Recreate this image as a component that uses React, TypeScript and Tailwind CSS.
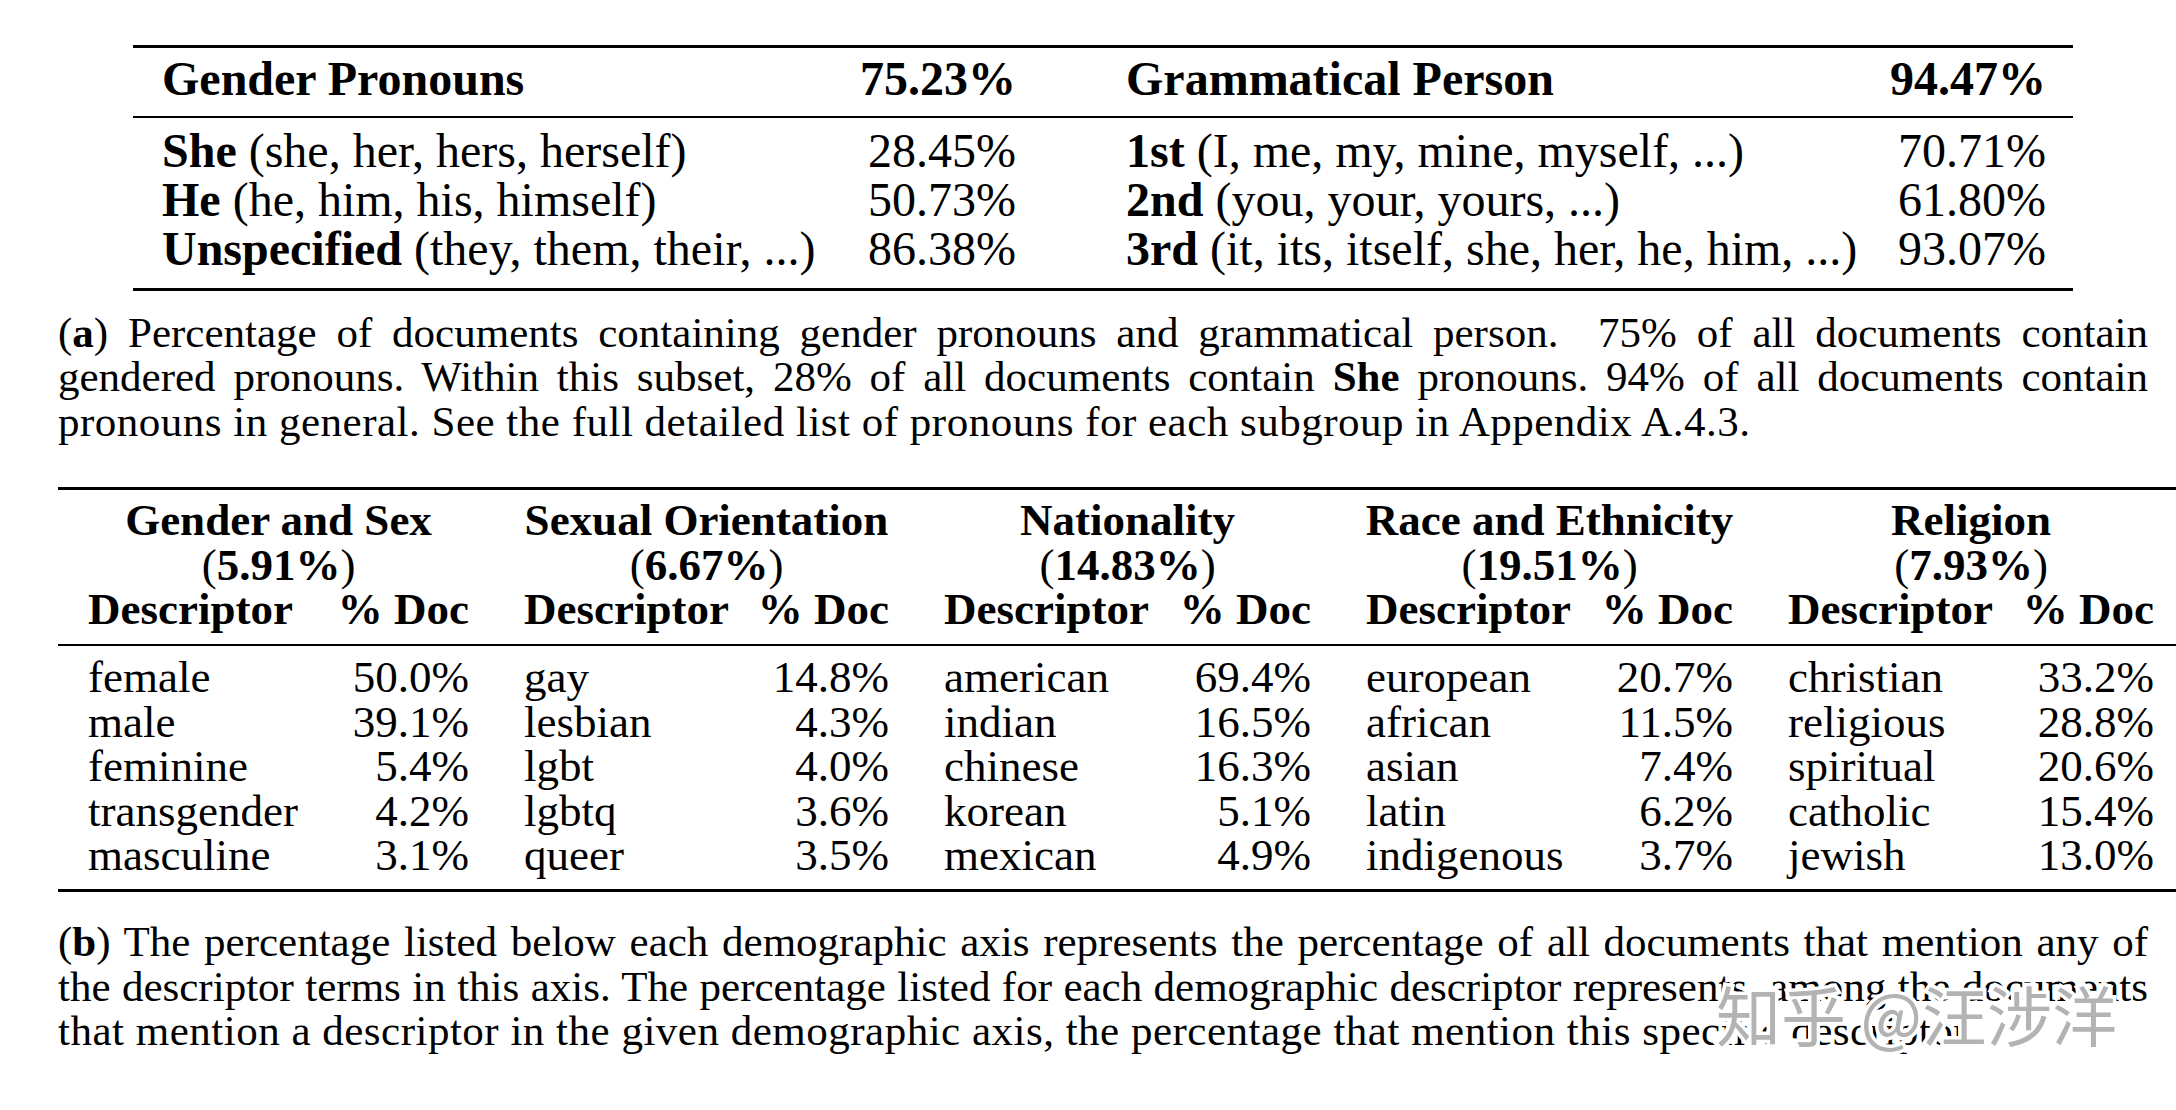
import React from 'react'

type Group = {
  name: string
  pct: string
  rows: [string, string][]
}

const groups: Group[] = [
  {
    name: 'Gender and Sex',
    pct: '5.91%',
    rows: [
      ['female', '50.0%'],
      ['male', '39.1%'],
      ['feminine', '5.4%'],
      ['transgender', '4.2%'],
      ['masculine', '3.1%'],
    ],
  },
  {
    name: 'Sexual Orientation',
    pct: '6.67%',
    rows: [
      ['gay', '14.8%'],
      ['lesbian', '4.3%'],
      ['lgbt', '4.0%'],
      ['lgbtq', '3.6%'],
      ['queer', '3.5%'],
    ],
  },
  {
    name: 'Nationality',
    pct: '14.83%',
    rows: [
      ['american', '69.4%'],
      ['indian', '16.5%'],
      ['chinese', '16.3%'],
      ['korean', '5.1%'],
      ['mexican', '4.9%'],
    ],
  },
  {
    name: 'Race and Ethnicity',
    pct: '19.51%',
    rows: [
      ['european', '20.7%'],
      ['african', '11.5%'],
      ['asian', '7.4%'],
      ['latin', '6.2%'],
      ['indigenous', '3.7%'],
    ],
  },
  {
    name: 'Religion',
    pct: '7.93%',
    rows: [
      ['christian', '33.2%'],
      ['religious', '28.8%'],
      ['spiritual', '20.6%'],
      ['catholic', '15.4%'],
      ['jewish', '13.0%'],
    ],
  },
]

const pronounRows: { left: [string, string, string]; right: [string, string, string] }[] = [
  {
    left: ['She', '(she, her, hers, herself)', '28.45%'],
    right: ['1st', '(I, me, my, mine, myself, ...)', '70.71%'],
  },
  {
    left: ['He', '(he, him, his, himself)', '50.73%'],
    right: ['2nd', '(you, your, yours, ...)', '61.80%'],
  },
  {
    left: ['Unspecified', '(they, them, their, ...)', '86.38%'],
    right: ['3rd', '(it, its, itself, she, her, he, him, ...)', '93.07%'],
  },
]

// caption lines: justified except the last one, which is set ragged
function Line({ children, last }: { children: React.ReactNode; last?: boolean }) {
  return (
    <div
      className={
        last
          ? 'text-left whitespace-nowrap tracking-[0.5px]'
          : 'text-justify [text-align-last:justify]'
      }
    >
      {children}
    </div>
  )
}

function PronounTable() {
  return (
    <div className="w-[1940px] text-[48px] leading-[49px]">
      <div className="h-[3px] bg-black" />
      <div className="grid grid-cols-[854px_920px] gap-x-[110px] pl-[29px] pt-[6px] pb-[13px] font-bold">
        <div className="flex justify-between">
          <span>Gender Pronouns</span>
          <span>75.23%</span>
        </div>
        <div className="flex justify-between">
          <span>Grammatical Person</span>
          <span>94.47%</span>
        </div>
      </div>
      <div className="h-[2px] bg-black" />
      <div className="grid grid-cols-[854px_920px] gap-x-[110px] pl-[29px] pt-[8px] pb-[15px]">
        {pronounRows.map((r, i) => (
          <React.Fragment key={i}>
            <div className="flex justify-between whitespace-nowrap">
              <span>
                <b>{r.left[0]}</b> {r.left[1]}
              </span>
              <span>{r.left[2]}</span>
            </div>
            <div className="flex justify-between whitespace-nowrap">
              <span>
                <b>{r.right[0]}</b> {r.right[1]}
              </span>
              <span>{r.right[2]}</span>
            </div>
          </React.Fragment>
        ))}
      </div>
      <div className="h-[3px] bg-black" />
    </div>
  )
}

function DemographicTable() {
  return (
    <div className="w-[2118px] text-[45px]">
      <div className="h-[3px] bg-black" />
      <div className="grid grid-cols-[381px_365px_367px_367px_366px] gap-x-[55px] pl-[30px] pt-[8px] pb-[13px] font-bold whitespace-nowrap">
        {groups.map((g) => (
          <div key={g.name} className="flex flex-col">
            <div className="flex justify-center">{g.name}</div>
            <div className="text-center">
              <span className="font-normal">(</span>
              {g.pct}
              <span className="font-normal">)</span>
            </div>
            <div className="flex justify-between">
              <span>Descriptor</span>
              <span>% Doc</span>
            </div>
          </div>
        ))}
      </div>
      <div className="h-[2px] bg-black" />
      <div className="grid grid-cols-[381px_365px_367px_367px_366px] gap-x-[55px] pl-[30px] pt-[9px] pb-[12px]">
        {groups.map((g) => (
          <div key={g.name} className="flex flex-col">
            {g.rows.map(([d, p]) => (
              <div key={d} className="flex justify-between">
                <span>{d}</span>
                <span>{p}</span>
              </div>
            ))}
          </div>
        ))}
      </div>
      <div className="h-[3px] bg-black" />
    </div>
  )
}

export default function App() {
  return (
    <div className="relative w-[2176px] h-[1110px] overflow-hidden bg-white text-black font-['Liberation_Serif',serif] text-[43px] leading-[44.4px]">
      <div className="pt-[45px] pl-[133px]">
        <PronounTable />
      </div>

      <div className="ml-[58px] mt-[20px] w-[2090px]">
        <Line>
          (<b>a</b>) Percentage of documents containing gender pronouns and grammatical person.&nbsp; 75% of all documents contain
        </Line>
        <Line>
          gendered pronouns. Within this subset, 28% of all documents contain <b>She</b> pronouns. 94% of all documents contain
        </Line>
        <Line last>
          pronouns in general. See the full detailed list of pronouns for each subgroup in Appendix A.4.3.
        </Line>
      </div>

      <div className="ml-[58px] mt-[43px]">
        <DemographicTable />
      </div>

      <div className="ml-[58px] mt-[28px] w-[2090px]">
        <Line>
          (<b>b</b>) The percentage listed below each demographic axis represents the percentage of all documents that mention any of
        </Line>
        <Line>
          the descriptor terms in this axis. The percentage listed for each demographic descriptor represents, among the documents
        </Line>
        <Line last>
          that mention a descriptor in the given demographic axis, the percentage that mention this specific descriptor.
        </Line>
      </div>

      <div className="absolute left-[1716px] top-[981px] whitespace-nowrap font-['Noto_Sans_CJK_SC',sans-serif] text-[65px] leading-[65px] text-[#b3b3b3] [-webkit-text-stroke:7px_white] [paint-order:stroke_fill]">
        知乎 @汪涉洋
      </div>
    </div>
  )
}
